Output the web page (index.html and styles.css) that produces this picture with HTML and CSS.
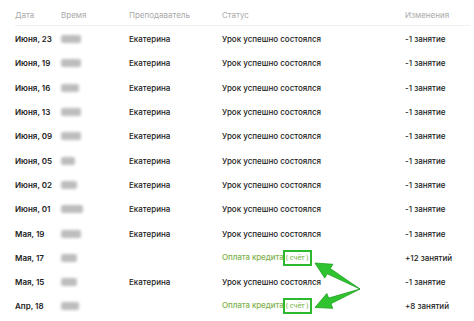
FILE: index.html
```html
<!DOCTYPE html>
<html lang="ru">
<head>
  <meta charset="UTF-8">
  <title>История занятий</title>
  <link rel="stylesheet" href="styles.css">
</head>
<body>
  <div class="history">
    <!-- Header -->
    <div class="row head">
      <div>Дата</div>
      <div>Время</div>
      <div>Преподаватель</div>
      <div>Статус</div>
      <div>Изменения</div>
    </div>

    <div class="row"><div class="date">Июня, 23</div><div><span class="blur w20"></span></div><div>Екатерина</div><div>Урок успешно состоялся</div><div>-1 занятие</div></div>
    <div class="row"><div class="date">Июня, 19</div><div><span class="blur w20"></span></div><div>Екатерина</div><div>Урок успешно состоялся</div><div>-1 занятие</div></div>
    <div class="row"><div class="date">Июня, 16</div><div><span class="blur w18"></span></div><div>Екатерина</div><div>Урок успешно состоялся</div><div>-1 занятие</div></div>
    <div class="row"><div class="date">Июня, 13</div><div><span class="blur w20"></span></div><div>Екатерина</div><div>Урок успешно состоялся</div><div>-1 занятие</div></div>
    <div class="row"><div class="date">Июня, 09</div><div><span class="blur w20"></span></div><div>Екатерина</div><div>Урок успешно состоялся</div><div>-1 занятие</div></div>
    <div class="row"><div class="date">Июня, 05</div><div><span class="blur w14"></span></div><div>Екатерина</div><div>Урок успешно состоялся</div><div>-1 занятие</div></div>
    <div class="row"><div class="date">Июня, 02</div><div><span class="blur w16"></span></div><div>Екатерина</div><div>Урок успешно состоялся</div><div>-1 занятие</div></div>
    <div class="row"><div class="date">Июня, 01</div><div><span class="blur w22"></span></div><div>Екатерина</div><div>Урок успешно состоялся</div><div>-1 занятие</div></div>
    <div class="row"><div class="date">Мая, 19</div><div><span class="blur w20"></span></div><div>Екатерина</div><div>Урок успешно состоялся</div><div>-1 занятие</div></div>
    <div class="row"><div class="date">Мая, 17</div><div><span class="blur w16"></span></div><div></div><div class="paid">Оплата кредита<span class="bill">( счёт )</span></div><div>+12 занятий</div></div>
    <div class="row"><div class="date">Мая, 15</div><div><span class="blur w16"></span></div><div>Екатерина</div><div>Урок успешно состоялся</div><div>-1 занятие</div></div>
    <div class="row"><div class="date">Апр, 18</div><div><span class="blur w18"></span></div><div></div><div class="paid">Оплата кредита<span class="bill">( счёт )</span></div><div>+8 занятий</div></div>
  </div>

  <!-- Annotation arrows -->
  <svg class="arrows" width="474" height="321" viewBox="0 0 474 321">
    <polygon points="360,289 330.3,268.6 332.9,264.3 315,263 324.7,278.1 327.3,273.8" fill="#2fc42f" stroke="#1e9e1e" stroke-width="0.8" stroke-linejoin="round"/>
    <polygon points="360,289 330.9,303.7 332.8,308.3 315,307.5 326.8,293.5 328.7,298.1" fill="#2fc42f" stroke="#1e9e1e" stroke-width="0.8" stroke-linejoin="round"/>
  </svg>
</body>
</html>
```

FILE: styles.css
```css
body {
  margin: 0;
  background: #fff;
  font-family: Inter, "Noto Sans", sans-serif;
  font-size: 8px;
  color: #222;
}

.history {
  padding: 0 4px 0 15px;
}

.row {
  display: grid;
  grid-template-columns: 46px 68px 93px 183px 1fr;
  align-items: center;
  height: 24.3px;
  font-weight: 500;
  white-space: nowrap;
}

.row.head {
  height: 25px;
  border-bottom: 1px solid #efefef;
  margin-bottom: 1px;
  color: #a9a9a9;
  font-weight: 400;
  align-items: end;
  line-height: 20px;
}

.date {
  font-weight: 600;
}

/* hidden time values */
.blur {
  display: block;
  height: 8px;
  background: #bdbdbd;
  border-radius: 2px;
  filter: blur(1.5px);
}
.w14 { width: 14px; }
.w16 { width: 16px; }
.w18 { width: 18px; }
.w20 { width: 20px; }
.w22 { width: 22px; }

.paid {
  color: #7fb24e;
  letter-spacing: -0.1px;
}

.bill {
  display: inline-block;
  margin-left: -1px;
  padding: 1px 1px;
  border: 2px solid #2db82d;
  font-size: 7px;
  letter-spacing: -0.2px;
  line-height: 10px;
  color: #8cbf5e;
}

.arrows {
  position: absolute;
  top: 0;
  left: 0;
  pointer-events: none;
}
```
